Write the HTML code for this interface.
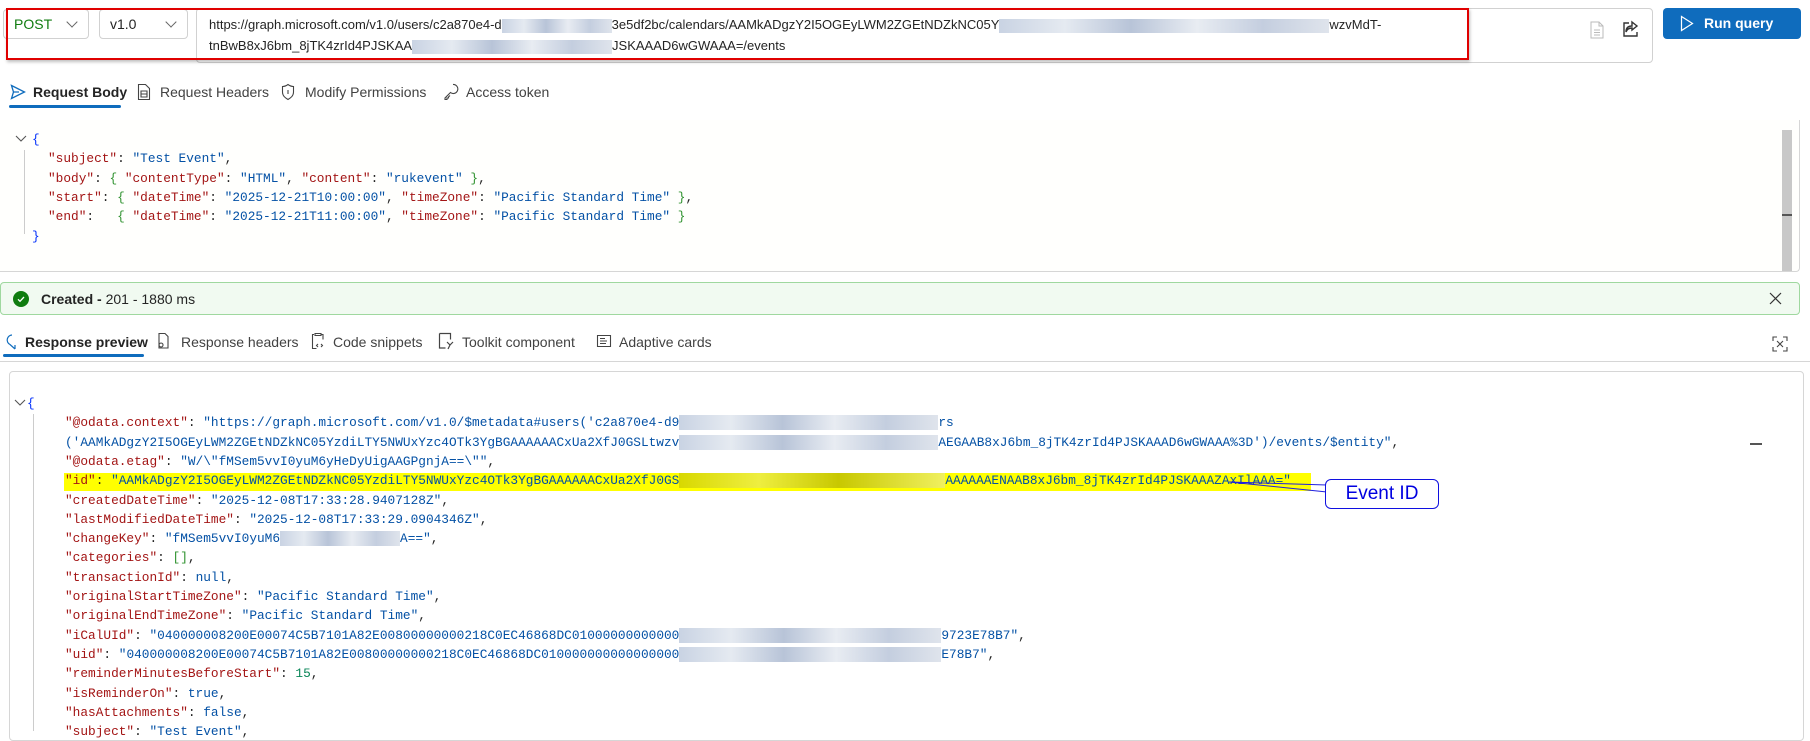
<!DOCTYPE html>
<html><head><meta charset="utf-8"><style>
*{box-sizing:border-box;margin:0;padding:0}
body{width:1810px;height:731px;overflow:hidden;background:#fff;font-family:"Liberation Sans",Arial,sans-serif;color:#242424;position:relative}
.abs{position:absolute}
.dd{position:absolute;top:9px;height:30px;border:1px solid #d1d1d1;border-radius:4px;background:#fff;font-size:14px;line-height:28px;padding-left:10px}
.chev{position:absolute;right:12px;top:8px;width:8px;height:8px;border-right:1px solid #666;border-bottom:1px solid #666;transform:rotate(45deg)}
.mono{font-family:"Liberation Mono","DejaVu Sans Mono",monospace;font-size:12.8px;white-space:pre}
.k{color:#a31515}.s{color:#0451a5}.g{color:#319331}.b{color:#0431fa}.n{color:#098658}
.bl{display:inline-block;height:15px;vertical-align:middle;background:linear-gradient(90deg,#c9d3e3,#e5eaf1 20%,#b8c4d8 40%,#e8ecf2 60%,#c4cedf 80%,#dfe4ec)}
.tab{position:absolute;font-size:14px;color:#424242;white-space:nowrap}
.ln{position:absolute;left:0;height:19px;line-height:19px}
</style></head><body>
<!-- top bar -->
<div class="dd" style="left:3px;width:86px;color:#107c10">POST<span class="chev"></span></div>
<div class="dd" style="left:99px;width:89px">v1.0<span class="chev"></span></div>
<div class="abs" style="left:196px;top:8px;width:1457px;height:55px;border:1px solid #d1d1d1;border-radius:4px;background:#fff"></div>
<div class="abs" style="left:209px;top:14px;font-size:13px;line-height:21px;color:#242424;white-space:nowrap">https://graph.microsoft.com/v1.0/users/c2a870e4-d<span class="bl" style="width:110px;height:14px"></span>3e5df2bc/calendars/AAMkADgzY2I5OGEyLWM2ZGEtNDZkNC05Y<span class="bl" style="width:330px;height:14px"></span>wzvMdT-<br>tnBwB8xJ6bm_8jTK4zrId4PJSKAA<span class="bl" style="width:200px;height:14px"></span>JSKAAAD6wGWAAA=/events</div>
<div class="abs" style="left:6px;top:8px;width:1463px;height:52px;border:2px solid #e00000;box-shadow:1px 2px 3px rgba(0,0,0,.25)"></div>
<svg class="abs" style="left:1590px;top:21px" width="14" height="18" viewBox="0 0 14 18"><path d="M1 1h8l4 4v12H1z M9 1v4h4 M4 9h6M4 11.5h6M4 14h6" fill="none" stroke="#bbb" stroke-width="1"/></svg>
<svg class="abs" style="left:1622px;top:20px" width="18" height="18" viewBox="0 0 18 18"><path d="M7 3H2v13h13v-4 M10 2l5 4-5 4V8c-3 0-5 1-6 4 0-4 2-6 6-6z" fill="none" stroke="#333" stroke-width="1.4"/></svg>
<div class="abs" style="left:1663px;top:8px;width:138px;height:31px;background:#0f6cbd;border-radius:4px;color:#fff;font-weight:bold;font-size:14px;line-height:31px;padding-left:41px">Run query</div>
<svg class="abs" style="left:1680px;top:15px" width="14" height="17" viewBox="0 0 14 17"><path d="M1.5 1.5L12.5 8.5L1.5 15.5Z" fill="none" stroke="#fff" stroke-width="1.2"/></svg>

<!-- request tabs -->
<svg class="abs" style="left:10px;top:84px" width="16" height="16" viewBox="0 0 16 16"><path d="M1.5 1.5L14.5 8L1.5 14.5L3.5 8Z M3.5 8H9" fill="none" stroke="#0f6cbd" stroke-width="1.3"/></svg>
<div class="tab" style="left:33px;top:84px;color:#242424;font-weight:bold">Request Body</div>
<div class="abs" style="left:9px;top:105px;width:112px;height:3px;background:#0f6cbd;border-radius:2px"></div>
<svg class="abs" style="left:137px;top:83px" width="14" height="18" viewBox="0 0 14 18"><path d="M1.5 1.5h7l4 4v11h-11z M4 8h6v6H4z M4 11h6" fill="none" stroke="#444" stroke-width="1.1"/></svg>
<div class="tab" style="left:160px;top:84px">Request Headers</div>
<svg class="abs" style="left:281px;top:83px" width="14" height="18" viewBox="0 0 14 18"><path d="M7 1.5C5 3 3 3.5 1.5 3.5V9c0 4 3 6 5.5 7.5 2.5-1.5 5.5-3.5 5.5-7.5V3.5C11 3.5 9 3 7 1.5z M7 7v4" fill="none" stroke="#444" stroke-width="1.1"/></svg>
<div class="tab" style="left:305px;top:84px">Modify Permissions</div>
<svg class="abs" style="left:443px;top:83px" width="16" height="18" viewBox="0 0 16 18"><path d="M10 1.5a4.5 4.5 0 1 1-2.5 8L2 15v1.5h2v-1.5h1.5V14L7 12.5 M11 4.5h.1" fill="none" stroke="#444" stroke-width="1.1"/></svg>
<div class="tab" style="left:466px;top:84px">Access token</div>
<div class="abs" style="left:0;top:120px;width:1800px;height:1px;background:#d6d6d6"></div>

<!-- request editor -->
<div class="abs" style="left:0;top:120px;width:1800px;height:152px;border-right:1px solid #d6d6d6;border-bottom:1px solid #d6d6d6;border-radius:0 0 4px 0;background:#fffffd"></div>
<div class="abs" style="left:1782px;top:130px;width:10px;height:141px;background:#c8c8c8"></div>
<div class="abs" style="left:1782px;top:214px;width:10px;height:2px;background:#555"></div>
<div class="abs" style="left:24px;top:150px;width:1px;height:84px;background:#ccc"></div>
<svg class="abs" style="left:15px;top:134px" width="12" height="10" viewBox="0 0 12 10"><path d="M1 2l5 5 5-5" fill="none" stroke="#555" stroke-width="1.1"/></svg>
<div class="mono" style="position:absolute;left:0;top:130px">
<div class="ln" style="top:0;left:32px"><span class="b">{</span></div>
<div class="ln" style="top:19.3px;left:48px"><span class="k">"subject"</span>: <span class="s">"Test Event"</span>,</div>
<div class="ln" style="top:38.6px;left:48px"><span class="k">"body"</span>: <span class="g">{</span> <span class="k">"contentType"</span>: <span class="s">"HTML"</span>, <span class="k">"content"</span>: <span class="s">"rukevent"</span> <span class="g">}</span>,</div>
<div class="ln" style="top:57.9px;left:48px"><span class="k">"start"</span>: <span class="g">{</span> <span class="k">"dateTime"</span>: <span class="s">"2025-12-21T10:00:00"</span>, <span class="k">"timeZone"</span>: <span class="s">"Pacific Standard Time"</span> <span class="g">}</span>,</div>
<div class="ln" style="top:77.2px;left:48px"><span class="k">"end"</span>:   <span class="g">{</span> <span class="k">"dateTime"</span>: <span class="s">"2025-12-21T11:00:00"</span>, <span class="k">"timeZone"</span>: <span class="s">"Pacific Standard Time"</span> <span class="g">}</span></div>
<div class="ln" style="top:96.5px;left:32px"><span class="b">}</span></div>
</div>

<!-- status -->
<div class="abs" style="left:0;top:282px;width:1800px;height:33px;background:#f1faf1;border:1px solid #9fd89f;border-radius:4px"></div>
<div class="abs" style="left:13px;top:291px;width:16px;height:16px;border-radius:50%;background:#107c10"></div>
<svg class="abs" style="left:13px;top:291px" width="16" height="16" viewBox="0 0 16 16"><path d="M5 8.3l2 2 4-4.3" fill="none" stroke="#fff" stroke-width="1.3"/></svg>
<div class="abs" style="left:41px;top:291px;font-size:14px"><b>Created -</b> 201 - 1880 ms</div>
<svg class="abs" style="left:1769px;top:292px" width="13" height="13" viewBox="0 0 13 13"><path d="M1 1l11 11M12 1L1 12" stroke="#333" stroke-width="1.2"/></svg>

<!-- response tabs -->
<svg class="abs" style="left:6px;top:333px" width="14" height="18" viewBox="0 0 14 18"><path d="M6 2a5 5 0 0 0-2 9.5L9 16 M9 16v-4" fill="none" stroke="#0f6cbd" stroke-width="1.2"/></svg>
<div class="tab" style="left:25px;top:334px;color:#242424;font-weight:bold">Response preview</div>
<div class="abs" style="left:3px;top:354px;width:141px;height:3px;background:#0f6cbd;border-radius:2px"></div>
<svg class="abs" style="left:156px;top:332px" width="14" height="18" viewBox="0 0 14 18"><path d="M3 1.5h6l3 3V16H3z M5 11a2 2 0 1 0 .1 0z" fill="none" stroke="#444" stroke-width="1.1"/></svg>
<div class="tab" style="left:181px;top:334px">Response headers</div>
<svg class="abs" style="left:311px;top:332px" width="14" height="18" viewBox="0 0 14 18"><path d="M4 1.5h6v2H4z M3 2.5H1.5V16.5h4 M10.5 2.5H12v5 M7 12l-1.5 1.5 1.5 1.5 M10 12l1.5 1.5L10 15" fill="none" stroke="#444" stroke-width="1.1"/></svg>
<div class="tab" style="left:333px;top:334px">Code snippets</div>
<svg class="abs" style="left:438px;top:332px" width="16" height="18" viewBox="0 0 16 18"><path d="M1.5 1.5h11v6 M1.5 1.5V16h6 M9 10l3 3-2 4 M12 13l3-3" fill="none" stroke="#444" stroke-width="1.2"/></svg>
<div class="tab" style="left:462px;top:334px">Toolkit component</div>
<svg class="abs" style="left:596px;top:334px" width="16" height="14" viewBox="0 0 16 14"><path d="M1.5 1.5h13v11h-13z M4 4.5h5M4 7h7M4 9.5h6" fill="none" stroke="#444" stroke-width="1.1"/></svg>
<div class="tab" style="left:619px;top:334px">Adaptive cards</div>
<svg class="abs" style="left:1772px;top:336px" width="16" height="16" viewBox="0 0 16 16"><path d="M1 5V1h4 M11 1h4v4 M15 11v4h-4 M5 15H1v-4 M5 5l6 6M5 11l6-6" fill="none" stroke="#444" stroke-width="1.1"/></svg>
<div class="abs" style="left:0;top:361px;width:1810px;height:1px;background:#d6d6d6"></div>

<!-- response editor -->
<div class="abs" style="left:9px;top:371px;width:1795px;height:370px;border:1px solid #d6d6d6;border-radius:4px;background:#fff"></div>
<div class="abs" style="left:1750px;top:443px;width:12px;height:2px;background:#555"></div>
<div class="abs" style="left:33px;top:414px;width:1px;height:317px;background:#ccc"></div>
<svg class="abs" style="left:14px;top:398px" width="12" height="10" viewBox="0 0 12 10"><path d="M1 2l5 5 5-5" fill="none" stroke="#555" stroke-width="1.1"/></svg>
<div class="abs" style="left:64px;top:473px;width:1247px;height:18px;background:#ffff00"></div>
<div class="mono" style="position:absolute;left:0;top:394px">
<div class="ln" style="top:0;left:27px"><span class="b">{</span></div>
<div class="ln" style="top:19.3px;left:65px"><span class="k">"@odata.context"</span>: <span class="s">"https://graph.microsoft.com/v1.0/$metadata#users('c2a870e4-d9</span><span class="bl" style="width:259px"></span><span class="s">rs</span></div>
<div class="ln" style="top:38.6px;left:65px"><span class="s">('AAMkADgzY2I5OGEyLWM2ZGEtNDZkNC05YzdiLTY5NWUxYzc4OTk3YgBGAAAAAACxUa2XfJ0GSLtwzv</span><span class="bl" style="width:259px"></span><span class="s">AEGAAB8xJ6bm_8jTK4zrId4PJSKAAAD6wGWAAA%3D')/events/$entity"</span>,</div>
<div class="ln" style="top:57.9px;left:65px"><span class="k">"@odata.etag"</span>: <span class="s">"W/\"fMSem5vvI0yuM6yHeDyUigAAGPgnjA==\""</span>,</div>
<div class="ln" style="top:77.2px;left:65px"><span class="k">"id"</span>: <span class="s">"AAMkADgzY2I5OGEyLWM2ZGEtNDZkNC05YzdiLTY5NWUxYzc4OTk3YgBGAAAAAACxUa2XfJ0GS</span><span class="bl" style="width:266px;background:linear-gradient(90deg,#d8d800,#eeee40 30%,#c8c800 60%,#f0f060)"></span><span class="s">AAAAAAENAAB8xJ6bm_8jTK4zrId4PJSKAAAZAxIlAAA="</span></div>
<div class="ln" style="top:96.5px;left:65px"><span class="k">"createdDateTime"</span>: <span class="s">"2025-12-08T17:33:28.9407128Z"</span>,</div>
<div class="ln" style="top:115.8px;left:65px"><span class="k">"lastModifiedDateTime"</span>: <span class="s">"2025-12-08T17:33:29.0904346Z"</span>,</div>
<div class="ln" style="top:135.1px;left:65px"><span class="k">"changeKey"</span>: <span class="s">"fMSem5vvI0yuM6</span><span class="bl" style="width:120px"></span><span class="s">A=="</span>,</div>
<div class="ln" style="top:154.4px;left:65px"><span class="k">"categories"</span>: <span class="g">[]</span>,</div>
<div class="ln" style="top:173.7px;left:65px"><span class="k">"transactionId"</span>: <span class="s">null</span>,</div>
<div class="ln" style="top:193px;left:65px"><span class="k">"originalStartTimeZone"</span>: <span class="s">"Pacific Standard Time"</span>,</div>
<div class="ln" style="top:212.3px;left:65px"><span class="k">"originalEndTimeZone"</span>: <span class="s">"Pacific Standard Time"</span>,</div>
<div class="ln" style="top:231.6px;left:65px"><span class="k">"iCalUId"</span>: <span class="s">"040000008200E00074C5B7101A82E00800000000218C0EC46868DC01000000000000</span><span class="bl" style="width:262px"></span><span class="s">9723E78B7"</span>,</div>
<div class="ln" style="top:250.9px;left:65px"><span class="k">"uid"</span>: <span class="s">"040000008200E00074C5B7101A82E00800000000218C0EC46868DC010000000000000000</span><span class="bl" style="width:262px"></span><span class="s">E78B7"</span>,</div>
<div class="ln" style="top:270.2px;left:65px"><span class="k">"reminderMinutesBeforeStart"</span>: <span class="n">15</span>,</div>
<div class="ln" style="top:289.5px;left:65px"><span class="k">"isReminderOn"</span>: <span class="s">true</span>,</div>
<div class="ln" style="top:308.8px;left:65px"><span class="k">"hasAttachments"</span>: <span class="s">false</span>,</div>
<div class="ln" style="top:328.1px;left:65px"><span class="k">"subject"</span>: <span class="s">"Test Event"</span>,</div>
</div>

<!-- callout -->
<svg class="abs" style="left:1225px;top:474px" width="110" height="30" viewBox="0 0 110 30"><path d="M4 8L102 18 M4 8L102 11" stroke="#2020e0" stroke-width="1" fill="none"/></svg>
<div class="abs" style="left:1325px;top:479px;width:114px;height:30px;border:1.5px solid #1010e0;border-radius:6px;background:#fff;color:#0000e0;font-size:19px;line-height:27px;text-align:center">Event ID</div>
</body></html>
